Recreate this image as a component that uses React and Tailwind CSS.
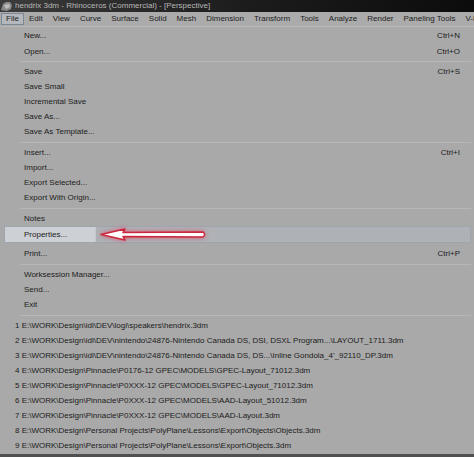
import React from "react";

const Sep = ({ h = 6 }) => (
  <div className={`flex items-center ${h === 5 ? "h-[5px]" : "h-[6px]"} pl-[20px] pr-[3px]`}>
    <div className="w-full h-[1px] bg-[#b7b7b7]" />
  </div>
);

const Item = ({ label, shortcut, h = 15 }) => (
  <div className={`flex items-center justify-between pl-[24px] pr-[14px] ${h === 16 ? "h-[16px]" : "h-[15px]"}`}>
    <span>{label}</span>
    {shortcut && <span>{shortcut}</span>}
  </div>
);

const Recent = ({ label }) => (
  <div className="flex items-center h-[15px] pl-[15px] whitespace-nowrap">
    <span>{label}</span>
  </div>
);

const menus = [
  "Edit",
  "View",
  "Curve",
  "Surface",
  "Solid",
  "Mesh",
  "Dimension",
  "Transform",
  "Tools",
  "Analyze",
  "Render",
  "Paneling Tools",
  "V-Ray",
];

const recents = [
  "1 E:\\WORK\\Design\\idl\\DEV\\logi\\speakers\\hendrix.3dm",
  "2 E:\\WORK\\Design\\idl\\DEV\\nintendo\\24876-Nintendo Canada DS, DSI, DSXL Program...\\LAYOUT_1711.3dm",
  "3 E:\\WORK\\Design\\idl\\DEV\\nintendo\\24876-Nintendo Canada DS, DS...\\Inline Gondola_4'_92110_DP.3dm",
  "4 E:\\WORK\\Design\\Pinnacle\\P0176-12 GPEC\\MODELS\\GPEC-Layout_71012.3dm",
  "5 E:\\WORK\\Design\\Pinnacle\\P0XXX-12 GPEC\\MODELS\\GPEC-Layout_71012.3dm",
  "6 E:\\WORK\\Design\\Pinnacle\\P0XXX-12 GPEC\\MODELS\\AAD-Layout_51012.3dm",
  "7 E:\\WORK\\Design\\Pinnacle\\P0XXX-12 GPEC\\MODELS\\AAD-Layout.3dm",
  "8 E:\\WORK\\Design\\Personal Projects\\PolyPlane\\Lessons\\Export\\Objects\\Objects.3dm",
  "9 E:\\WORK\\Design\\Personal Projects\\PolyPlane\\Lessons\\Export\\Objects.3dm",
];

export default function App() {
  return (
    <div className="w-[474px] h-[457px] overflow-hidden flex flex-col bg-[#a9a9a9] text-[#1c1c1c] text-[8px] leading-none font-['Liberation_Sans',Arial,sans-serif]">
      {/* Title bar */}
      <div className="h-[12px] flex items-center bg-gradient-to-r from-[#3c3c3c] via-[#1d1d1d] to-[#0c0c0c] shrink-0">
        <svg width="13" height="12" viewBox="0 0 13 12" className="shrink-0">
          <path d="M1 10 L3 4 L6 2 L10 2 L12 5 L11 9 L7 11 Z" fill="#8a8a8a" />
          <path d="M4 5 L9 4 L10 7 L6 9 Z" fill="#bdbdbd" />
        </svg>
        <span className="ml-[2px] text-[#b8b8b8] whitespace-nowrap">
          hendrix 3dm - Rhinoceros (Commercial) - [Perspective]
        </span>
      </div>

      {/* Menu bar */}
      <div className="h-[15px] flex items-center pl-[1px] bg-[#ababab] border-b border-[#b9b9b9] shrink-0 whitespace-nowrap overflow-hidden">
        <div className="h-[12px] flex items-center px-[4px] border border-[#7d8896] bg-[#b4b8bd]">
          File
        </div>
        {menus.map((m) => (
          <div key={m} className="px-[5px] h-[12px] flex items-center shrink-0">
            {m}
          </div>
        ))}
      </div>

      {/* Menu body */}
      <div className="flex flex-col pt-[1px] shrink-0">
        <Item label="New..." shortcut="Ctrl+N" h={16} />
        <Item label="Open..." shortcut="Ctrl+O" />
        <Sep h={5} />
        <Item label="Save" shortcut="Ctrl+S" />
        <Item label="Save Small" />
        <Item label="Incremental Save" />
        <Item label="Save As..." />
        <Item label="Save As Template..." />
        <Sep />
        <Item label="Insert..." shortcut="Ctrl+I" />
        <Item label="Import..." />
        <Item label="Export Selected..." />
        <Item label="Export With Origin..." />
        <Sep />
        <Item label="Notes" />
        {/* Highlighted row */}
        <div className="relative h-[17px] pl-[4px] pr-[3px] flex">
          <div className="flex-1 flex border border-[#9ea5b0] bg-[#aeb1b5]">
            <div className="w-[91px] h-full flex items-center pl-[19px] bg-[#cdd0d4] border-r border-[#c4c8cd]">
              Properties...
            </div>
          </div>
          <svg
            width="110"
            height="15"
            viewBox="0 0 110 15"
            className="absolute left-[99px] top-[1px] drop-shadow-[0_0_2px_rgba(235,70,100,0.9)]"
          >
            <path
              d="M2 7.5 L26 2 L24 5.5 L104 5 Q107 7.5 104 10 L24 9.5 L26 13 Z"
              fill="#ffffff"
              stroke="#c9283e"
              strokeWidth="1.5"
              strokeLinejoin="round"
            />
          </svg>
        </div>
        <div className="h-[3px]" />
        <Item label="Print..." shortcut="Ctrl+P" />
        <Sep />
        <Item label="Worksession Manager..." />
        <Item label="Send..." />
        <Item label="Exit" />
        <Sep />
        {recents.map((r) => (
          <Recent key={r} label={r} />
        ))}
      </div>
      <div className="flex-1" />
      <div className="h-[3px] bg-[#505050] shrink-0" />
    </div>
  );
}
